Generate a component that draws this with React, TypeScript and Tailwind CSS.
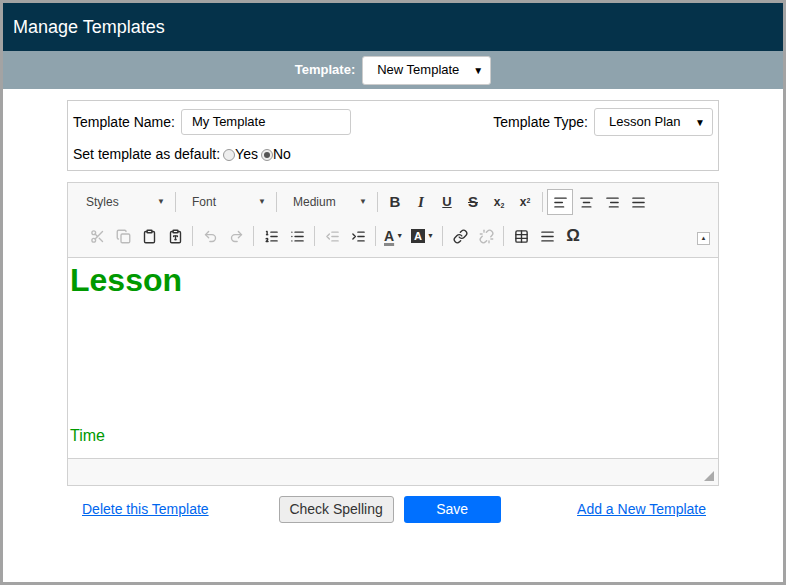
import React from "react";
import { Scissors, Copy, Clipboard, ClipboardType, Undo2, Redo2, ListOrdered, List, IndentDecrease, IndentIncrease, Link, Unlink, Table, AlignLeft, AlignCenter, AlignRight, AlignJustify } from "lucide-react";

const Sep = () => <div className="w-px h-[20px] bg-[#ccc] mx-[4px]" />;
const Btn = ({ children, active = false, dim = false }: { children: React.ReactNode; active?: boolean; dim?: boolean }) => (
  <div className={`w-[26px] h-[26px] flex items-center justify-center ${active ? "border border-[#bbb] bg-white" : ""} ${dim ? "text-[#bbb]" : "text-[#333]"}`}>{children}</div>
);
const Combo = ({ label, w }: { label: string; w: number }) => (
  <div className="flex items-center justify-between pl-[12px] pr-[6px] text-[12px] text-[#444]" style={{ width: w }}>
    <span>{label}</span><span className="text-[8px]">▼</span>
  </div>
);

export default function App() {
  const ic = { size: 15, strokeWidth: 2.2 };
  return (
    <div className="w-[786px] h-[585px] border-[3px] border-[#a3a3a3] bg-white box-border flex flex-col" style={{ fontFamily: "Arial, 'Liberation Sans', sans-serif" }}>
      <div className="h-[48px] bg-[#05324a] text-white text-[18px] flex items-center pl-[10px]">Manage Templates</div>
      <div className="h-[38px] bg-[#8fa3ad] flex items-center justify-center gap-[7px]">
        <span className="text-white text-[13px] font-bold">Template:</span>
        <div className="w-[129px] h-[29px] bg-white rounded-[3px] border border-[#ccc] flex items-center justify-between pl-[14px] pr-[7px] text-[13px] text-black">
          <span>New Template</span><span className="text-[10px]">▼</span>
        </div>
      </div>
      <div className="mx-[64px] mt-[11px] border border-[#ccc] h-[71px] px-[5px] pt-[7px] text-[14px] text-black">
        <div className="flex items-center justify-between">
          <div className="flex items-center gap-[6px]">
            <span>Template Name:</span>
            <div className="w-[170px] h-[26px] border border-[#ccc] rounded-[3px] flex items-center pl-[10px] text-[13px]">My Template</div>
          </div>
          <div className="flex items-center gap-[6px]">
            <span>Template Type:</span>
            <div className="w-[119px] h-[28px] border border-[#ccc] rounded-[3px] flex items-center justify-between pl-[14px] pr-[7px] text-[13px]"><span>Lesson Plan</span><span className="text-[10px]">▼</span></div>
          </div>
        </div>
        <div className="mt-[8px] flex items-center">
          <span>Set template as default:</span>
          <span className="ml-[3px] w-[12px] h-[12px] rounded-full border border-[#999] bg-[#eee]" />
          <span>Yes</span>
          <span className="ml-[3px] w-[12px] h-[12px] rounded-full border border-[#999] bg-[#eee] flex items-center justify-center"><span className="w-[6px] h-[6px] rounded-full bg-[#555]" /></span>
          <span>No</span>
        </div>
      </div>
      <div className="mx-[64px] mt-[11px] border border-[#d1d1d1] h-[304px] flex flex-col">
        <div className="bg-[#f8f8f8] border-b border-[#d1d1d1] h-[75px] px-[6px] pt-[6px] relative">
          <div className="flex items-center h-[26px]">
            <Combo label="Styles" w={97} /><Sep />
            <Combo label="Font" w={92} /><Sep />
            <Combo label="Medium" w={92} /><Sep />
            <Btn><b className="text-[15px]">B</b></Btn>
            <Btn><i className="text-[15px] font-bold" style={{ fontFamily: "'Liberation Serif', serif" }}>I</i></Btn>
            <Btn><u className="text-[13px] font-bold">U</u></Btn>
            <Btn><s className="text-[15px] font-bold">S</s></Btn>
            <Btn><span className="text-[12px] font-bold">x<sub className="text-[7px]">2</sub></span></Btn>
            <Btn><span className="text-[12px] font-bold">x<sup className="text-[7px]">2</sup></span></Btn>
            <Sep />
            <Btn active><AlignLeft {...ic} /></Btn>
            <Btn><AlignCenter {...ic} /></Btn>
            <Btn><AlignRight {...ic} /></Btn>
            <Btn><AlignJustify {...ic} /></Btn>
          </div>
          <div className="flex items-center h-[26px] mt-[8px]">
            <div className="w-[10px]" />
            <Btn dim><Scissors {...ic} /></Btn>
            <Btn dim><Copy {...ic} /></Btn>
            <Btn><Clipboard {...ic} /></Btn>
            <Btn><ClipboardType {...ic} /></Btn>
            <Sep />
            <Btn dim><Undo2 {...ic} /></Btn>
            <Btn dim><Redo2 {...ic} /></Btn>
            <Sep />
            <Btn><ListOrdered {...ic} /></Btn>
            <Btn><List {...ic} /></Btn>
            <Sep />
            <Btn dim><IndentDecrease {...ic} /></Btn>
            <Btn><IndentIncrease {...ic} /></Btn>
            <Sep />
            <div className="flex items-center gap-[2px] px-[4px] text-[#333]"><span className="text-[14px] font-bold underline decoration-[3px] decoration-[#888]">A</span><span className="text-[7px]">▼</span></div>
            <div className="flex items-center gap-[2px] px-[4px]"><span className="w-[14px] h-[14px] bg-[#333] text-white text-[11px] font-bold flex items-center justify-center">A</span><span className="text-[7px] text-[#333]">▼</span></div>
            <Sep />
            <Btn><Link {...ic} /></Btn>
            <Btn dim><Unlink {...ic} /></Btn>
            <Sep />
            <Btn><Table {...ic} /></Btn>
            <Btn><AlignJustify {...ic} /></Btn>
            <Btn><span className="text-[17px] font-bold">Ω</span></Btn>
          </div>
          <div className="absolute right-[8px] bottom-[12px] w-[13px] h-[13px] border border-[#bbb] bg-white flex items-center justify-center text-[6px] text-[#333]">▲</div>
        </div>
        <div className="flex-1 px-[2px] pt-[3px] flex flex-col justify-between pb-[10px] text-[#009900]">
          <div className="text-[32px] font-bold leading-[38px]">Lesson</div>
          <div className="text-[16px]">Time</div>
        </div>
        <div className="h-[27px] bg-[#f8f8f8] border-t border-[#d1d1d1] relative">
          <div className="absolute right-[4px] bottom-[4px] w-0 h-0 border-l-[10px] border-l-transparent border-b-[10px] border-b-[#aaa]" />
        </div>
      </div>
      <div className="mx-[64px] mt-[10px] flex items-center h-[27px] text-[14px]">
        <span className="ml-[15px] text-[#0066ee] underline">Delete this Template</span>
        <div className="ml-[70px] w-[115px] h-[27px] border border-[#aaa] rounded-[3px] bg-[#eee] flex items-center justify-center text-[#333]">Check Spelling</div>
        <div className="ml-[10px] w-[97px] h-[27px] rounded-[3px] bg-[#0070ff] text-white flex items-center justify-center">Save</div>
        <span className="ml-auto mr-[13px] text-[#0066ee] underline">Add a New Template</span>
      </div>
    </div>
  );
}
